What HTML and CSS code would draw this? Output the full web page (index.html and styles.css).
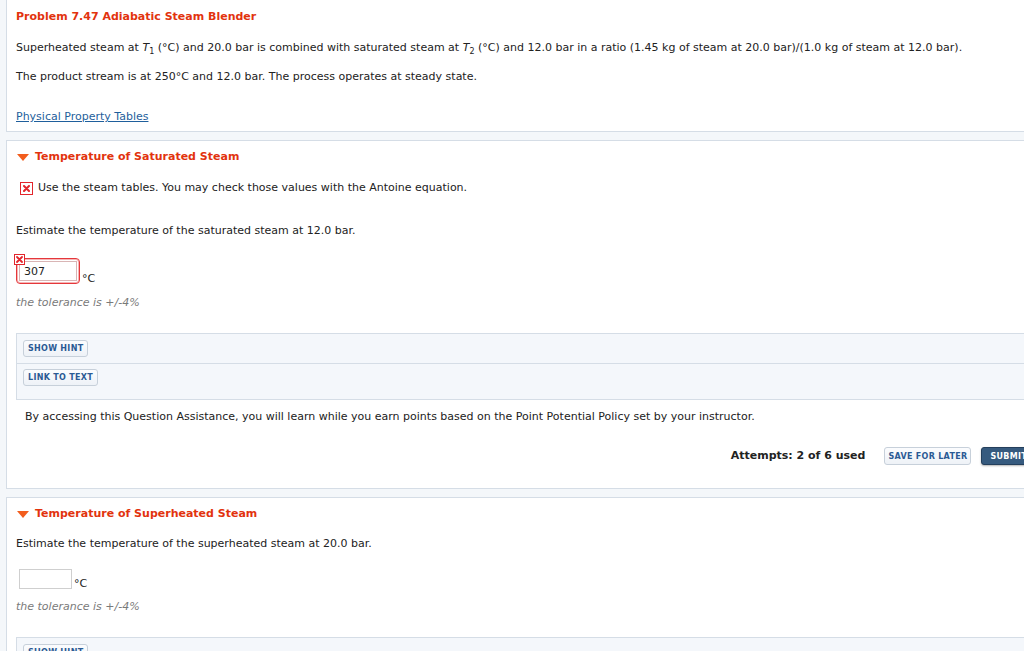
FILE: index.html
```html
<!DOCTYPE html>
<html lang="en">
<head>
  <meta charset="UTF-8">
  <title>Problem 7.47 Adiabatic Steam Blender</title>
  <link rel="stylesheet" href="styles.css">
</head>
<body>

  <div class="page">

    <div class="panel intro">
      <h2 class="problem-title">Problem 7.47 Adiabatic Steam Blender</h2>
      <p class="statement">Superheated steam at <i>T</i><sub>1</sub> (°C) and 20.0 bar is combined with saturated steam at <i>T</i><sub>2</sub> (°C) and 12.0 bar in a ratio (1.45 kg of steam at 20.0 bar)/(1.0 kg of steam at 12.0 bar).</p>
      <p class="statement second">The product stream is at 250°C and 12.0 bar. The process operates at steady state.</p>
      <a class="tables-link" href="#">Physical Property Tables</a>
    </div>

    <div class="panel part">
      <h3 class="part-title"><span class="caret"></span>Temperature of Saturated Steam</h3>

      <div class="note">
        <span class="x-box">
          <svg width="7" height="7" viewBox="0 0 7 7"><path d="M1 1L6 6M6 1L1 6" stroke="#e3262c" stroke-width="2" stroke-linecap="round"/></svg>
        </span>
        Use the steam tables. You may check those values with the Antoine equation.
      </div>

      <p class="question">Estimate the temperature of the saturated steam at 12.0 bar.</p>

      <div class="answer-row has-error">
        <div class="answer-box error">
          <span class="badge">
            <svg width="7" height="7" viewBox="0 0 7 7"><path d="M1 1L6 6M6 1L1 6" stroke="#e3262c" stroke-width="1.8" stroke-linecap="round"/></svg>
          </span>
          <input class="answer-field" type="text" value="307">
        </div>
        <span class="unit">°C</span>
      </div>
      <p class="tolerance">the tolerance is +/-4%</p>

      <div class="assist">
        <div class="assist-row"><button class="small-btn">Show Hint</button></div>
        <div class="assist-row last"><button class="small-btn">Link to Text</button></div>
      </div>

      <p class="policy">By accessing this Question Assistance, you will learn while you earn points based on the Point Potential Policy set by your instructor.</p>

      <div class="actions">
        <span class="attempts">Attempts: 2 of 6 used</span>
        <button class="small-btn">Save for Later</button>
        <button class="submit-btn">Submit Answer</button>
      </div>
    </div>

    <div class="panel part">
      <h3 class="part-title"><span class="caret"></span>Temperature of Superheated Steam</h3>

      <p class="question first">Estimate the temperature of the superheated steam at 20.0 bar.</p>

      <div class="answer-row">
        <div class="answer-box">
          <input class="answer-field" type="text" value="">
        </div>
        <span class="unit">°C</span>
      </div>
      <p class="tolerance">the tolerance is +/-4%</p>

      <div class="assist">
        <div class="assist-row"><button class="small-btn">Show Hint</button></div>
        <div class="assist-row last"><button class="small-btn">Link to Text</button></div>
      </div>
    </div>

  </div>

</body>
</html>
```

FILE: styles.css
```css
* {
  box-sizing: border-box;
}

html, body {
  margin: 0;
  padding: 0;
  overflow: hidden;
}

body {
  font-family: 'DejaVu Sans', Verdana, sans-serif;
  font-size: 11px;
  line-height: 14px;
  color: #222;
  background-color: #f4f7fa;
}

.page {
  width: 1090px;
  padding-left: 6px;
}

.panel {
  background-color: white;
  border: 1px solid #d5dde6;
  padding: 9px 9px 0;
  margin-bottom: 8px;
}

.intro {
  border-top: none;
  padding-top: 10px;
  padding-bottom: 7px;
}

.problem-title {
  margin: 0;
  font-size: 11px;
  color: #e2330e;
}

.statement {
  margin: 17px 0 0;
}

.statement.second {
  margin-top: 15px;
}

.statement sub {
  font-size: 8px;
  line-height: 0;
}

.tables-link {
  display: inline-block;
  margin-top: 26px;
  color: #1f5f9c;
}

.part-title {
  display: flex;
  align-items: center;
  margin: 0;
  font-size: 11px;
  color: #e2330e;
}

.caret {
  width: 0;
  height: 0;
  margin: 0 6px 0 1px;
  border-left: 6px solid transparent;
  border-right: 6px solid transparent;
  border-top: 7px solid #f25d1d;
}

.note {
  display: flex;
  align-items: center;
  gap: 5px;
  margin-top: 17px;
  padding-left: 4px;
}

.x-box {
  display: flex;
  align-items: center;
  justify-content: center;
  width: 13px;
  height: 13px;
  border: 1px solid #e3262c;
  background-color: white;
}

.question {
  margin: 29px 0 0;
}

.question.first {
  margin-top: 16px;
}

.answer-row {
  display: flex;
  align-items: flex-end;
  margin-top: 18px;
}

.answer-row.has-error {
  margin-top: 20px;
}

.answer-box {
  position: relative;
  margin-left: 3px;
}

.answer-box.error {
  margin-left: 0;
  padding: 2px;
  border: 1px solid #e5373b;
  border-radius: 4px;
  box-shadow: inset 0 0 0 1px #f6b5b5;
}

.badge {
  position: absolute;
  top: -5px;
  left: -3px;
  display: flex;
  align-items: center;
  justify-content: center;
  width: 11px;
  height: 11px;
  border: 1px solid #e3262c;
  background-color: white;
}

.answer-field {
  display: block;
  width: 53px;
  height: 20px;
  padding: 0 4px;
  border: 1px solid #cfcfcf;
  font-family: 'DejaVu Sans', Verdana, sans-serif;
  font-size: 11px;
  color: #222;
}

.error .answer-field {
  width: 58px;
  border-color: #d9b5b5;
}

.unit {
  margin-left: 2px;
  line-height: 10px;
}

.tolerance {
  margin: 11px 0 0;
  font-style: italic;
  color: #7a7a7a;
}

.has-error + .tolerance {
  margin-top: 12px;
}

.assist {
  margin-top: 23px;
  border: 1px solid #d5dde6;
  background-color: #f4f7fb;
}

.assist-row {
  padding: 6px 6px;
  border-bottom: 1px solid #d5dde6;
}

.assist-row.last {
  border-bottom: none;
  padding: 5px 6px 13px;
}

.small-btn {
  height: 17px;
  padding: 0 4px;
  border: 1px solid #c7d0da;
  border-radius: 3px;
  background: linear-gradient(#fbfcfe, #eef2f7);
  font-family: 'DejaVu Sans', Verdana, sans-serif;
  font-size: 8px;
  font-weight: bold;
  text-transform: uppercase;
  letter-spacing: 0.3px;
  color: #2b5a94;
  cursor: pointer;
}

.policy {
  margin: 10px 0 0;
  padding-left: 9px;
}

.actions {
  display: flex;
  align-items: center;
  justify-content: flex-end;
  gap: 10px;
  margin-top: 23px;
  padding-bottom: 23px;
}

.attempts {
  margin-right: 9px;
  font-weight: bold;
}

.actions .small-btn {
  height: 18px;
  padding: 0 3px;
}

.submit-btn {
  height: 18px;
  padding: 0 8px;
  border: 1px solid #243f5c;
  border-radius: 3px;
  background-color: #365a7e;
  box-shadow: 0 1px 2px rgba(0, 0, 0, 0.3);
  font-family: 'DejaVu Sans', Verdana, sans-serif;
  font-size: 8px;
  font-weight: bold;
  text-transform: uppercase;
  letter-spacing: 0.3px;
  color: white;
  cursor: pointer;
}
```
